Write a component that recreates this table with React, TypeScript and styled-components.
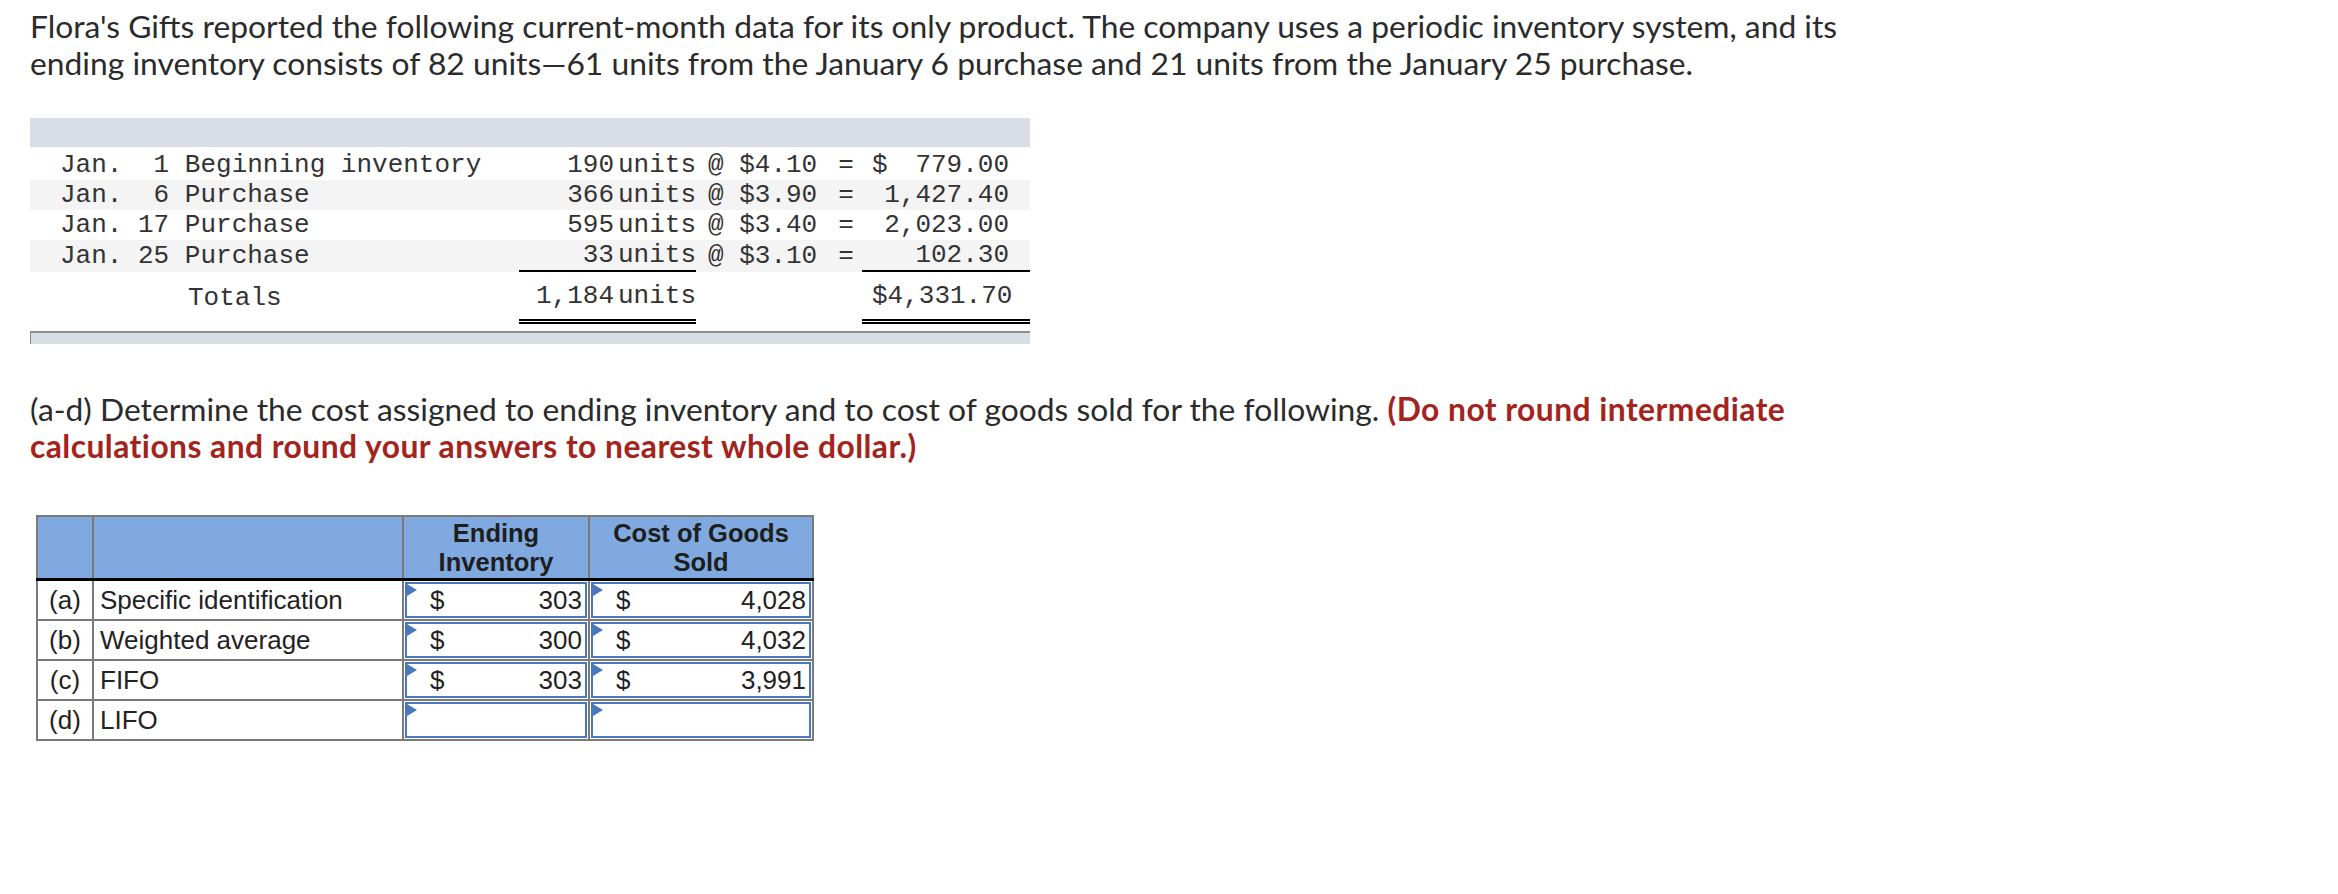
import React from 'react';
import styled, { createGlobalStyle } from 'styled-components';

const GlobalStyle = createGlobalStyle`
  html, body {
    margin: 0;
    padding: 0;
    background: #fff;
  }
  body {
    font-family: Lato, 'Liberation Sans', sans-serif;
    color: #2b2b2b;
  }
`;

type LedgerLine = {
  label: string;
  qty: string;
  rate: string;
  amount: string;
  dollar?: boolean;
};

const purchases: LedgerLine[] = [
  { label: 'Jan.  1 Beginning inventory', qty: '190', rate: '@ $4.10', amount: '779.00', dollar: true },
  { label: 'Jan.  6 Purchase', qty: '366', rate: '@ $3.90', amount: '1,427.40' },
  { label: 'Jan. 17 Purchase', qty: '595', rate: '@ $3.40', amount: '2,023.00' },
  { label: 'Jan. 25 Purchase', qty: '33', rate: '@ $3.10', amount: '102.30' },
];

type Answer = { key: string; method: string; ending?: string; cogs?: string };

const answers: Answer[] = [
  { key: '(a)', method: 'Specific identification', ending: '303', cogs: '4,028' },
  { key: '(b)', method: 'Weighted average', ending: '300', cogs: '4,032' },
  { key: '(c)', method: 'FIFO', ending: '303', cogs: '3,991' },
  { key: '(d)', method: 'LIFO' },
];

const App: React.FC = () => {
  return (
    <>
      <GlobalStyle />
      <Page>
        <Prompt>
          Flora's Gifts reported the following current-month data for its only product. The company uses a periodic inventory system, and its
          <br />
          ending inventory consists of 82 units—61 units from the January 6 purchase and 21 units from the January 25 purchase.
        </Prompt>

        <Ledger>
          <LedgerBand />
          {purchases.map((p, i) => {
            const last = i === purchases.length - 1;
            return (
              <LedgerRow key={p.label} $shade={i % 2 === 1} $height={last ? 32 : 30}>
                <Desc>{p.label}</Desc>
                <Units $rule={last ? 'single' : undefined}>
                  <span>{p.qty}</span>
                  <span>units</span>
                </Units>
                <Rate>{p.rate}</Rate>
                <Equals>=</Equals>
                <Amount $rule={last ? 'single' : undefined}>
                  <span>{p.dollar ? '$' : ''}</span>
                  <span>{p.amount}</span>
                </Amount>
              </LedgerRow>
            );
          })}
          <LedgerRow $height={52}>
            <Desc $indent={158}>Totals</Desc>
            <Units $rule="double">
              <span>1,184</span>
              <span>units</span>
            </Units>
            <Rate />
            <Equals />
            <Amount $rule="double">
              <span />
              <span>$4,331.70</span>
            </Amount>
          </LedgerRow>
          <LedgerFoot />
        </Ledger>

        <Instructions>
          (a-d) Determine the cost assigned to ending inventory and to cost of goods sold for the following.{' '}
          <Note>(Do not round intermediate</Note>
          <br />
          <Note>calculations and round your answers to nearest whole dollar.)</Note>
        </Instructions>

        <AnswerTable>
          <colgroup>
            <col style={{ width: 56 }} />
            <col style={{ width: 310 }} />
            <col style={{ width: 186 }} />
            <col style={{ width: 224 }} />
          </colgroup>
          <thead>
            <tr>
              <HeadCell />
              <HeadCell />
              <HeadCell>
                Ending
                <br />
                Inventory
              </HeadCell>
              <HeadCell>
                Cost of Goods
                <br />
                Sold
              </HeadCell>
            </tr>
          </thead>
          <tbody>
            {answers.map((a) => (
              <tr key={a.key}>
                <KeyCell>{a.key}</KeyCell>
                <MethodCell>{a.method}</MethodCell>
                <EntryCell>
                  <Entry>
                    {a.ending && (
                      <>
                        <span>$</span>
                        <span>{a.ending}</span>
                      </>
                    )}
                  </Entry>
                </EntryCell>
                <EntryCell>
                  <Entry>
                    {a.cogs && (
                      <>
                        <span>$</span>
                        <span>{a.cogs}</span>
                      </>
                    )}
                  </Entry>
                </EntryCell>
              </tr>
            ))}
          </tbody>
        </AnswerTable>
      </Page>
    </>
  );
};

export default App;

const Page = styled.div`
  padding: 8px 30px 40px;
  width: 2338px;
  box-sizing: border-box;
`;

const Prompt = styled.p`
  margin: 0;
  font-size: 31.8px;
  line-height: 37px;
  color: #2b2b2b;
  white-space: nowrap;
`;

const Ledger = styled.div`
  margin-top: 36px;
  width: 1000px;
  font-family: 'Liberation Mono', 'DejaVu Sans Mono', monospace;
  font-size: 26px;
  color: #333;
`;

const LedgerBand = styled.div`
  height: 29px;
  margin-bottom: 3px;
  background: #d9dde6;
`;

const LedgerRow = styled.div<{ $shade?: boolean; $height: number }>`
  display: grid;
  grid-template-columns: 489px 177px 134px 32px 168px;
  height: ${(p) => p.$height}px;
  background: ${(p) => (p.$shade ? '#f4f4f4' : '#fff')};
`;

const ruleFor = (rule?: 'single' | 'double') =>
  rule === 'double' ? '5px double #000' : rule === 'single' ? '2px solid #000' : 'none';

const Desc = styled.div<{ $indent?: number }>`
  display: flex;
  align-items: center;
  padding-left: ${(p) => p.$indent ?? 30}px;
  white-space: pre;
`;

const Units = styled.div<{ $rule?: 'single' | 'double' }>`
  display: flex;
  align-items: center;
  justify-content: flex-end;
  gap: 4px;
  box-sizing: border-box;
  border-bottom: ${(p) => ruleFor(p.$rule)};
`;

const Rate = styled.div`
  display: flex;
  align-items: center;
  padding-left: 12px;
  white-space: pre;
`;

const Equals = styled.div`
  display: flex;
  align-items: center;
  justify-content: center;
`;

const Amount = styled.div<{ $rule?: 'single' | 'double' }>`
  display: flex;
  align-items: center;
  justify-content: space-between;
  padding: 0 21px 0 10px;
  box-sizing: border-box;
  border-bottom: ${(p) => ruleFor(p.$rule)};
`;

const LedgerFoot = styled.div`
  margin-top: 7px;
  height: 11px;
  background: #d9dde6;
  border-top: 2px solid #8c8c8c;
  border-left: 1px solid #8c8c8c;
`;

const Instructions = styled.p`
  margin: 47px 0 0;
  font-size: 31.8px;
  line-height: 37px;
  color: #2b2b2b;
  white-space: nowrap;
`;

const Note = styled.span`
  color: #a3241d;
  font-weight: 700;
  letter-spacing: 0.45px;
`;

const AnswerTable = styled.table`
  margin: 50px 0 0 6px;
  border-collapse: collapse;
  table-layout: fixed;
  width: 776px;
  font-family: 'Liberation Sans', Arial, sans-serif;
  font-size: 26px;
  color: #222;
`;

const HeadCell = styled.th`
  background: #80aadf;
  border: 2px solid #7a7a7a;
  border-bottom: 3px solid #000;
  height: 61px;
  padding: 0;
  font-size: 25.5px;
  font-weight: 700;
  line-height: 29px;
  text-align: center;
  vertical-align: middle;
  color: #1e1e1e;
`;

const BodyCell = styled.td`
  border: 2px solid #7a7a7a;
  height: 38px;
  padding: 0;
  vertical-align: middle;
  box-sizing: border-box;
`;

const KeyCell = styled(BodyCell)`
  text-align: center;
`;

const MethodCell = styled(BodyCell)`
  padding-left: 6px;
  white-space: nowrap;
`;

const EntryCell = styled(BodyCell)`
  padding: 1px;
`;

const Entry = styled.div`
  position: relative;
  box-sizing: border-box;
  height: 36px;
  border: 2px solid #4a78ba;
  display: flex;
  align-items: center;
  justify-content: space-between;
  padding: 0 3px 0 23px;

  &::before {
    content: '';
    position: absolute;
    left: 0;
    top: 0;
    border-left: 10px solid #4a78ba;
    border-top: 6px solid transparent;
    border-bottom: 6px solid transparent;
  }
`;
